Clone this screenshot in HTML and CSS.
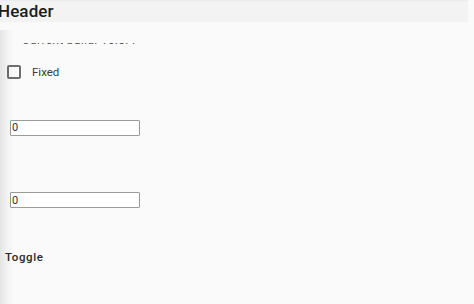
FILE: index.html
```html
<!DOCTYPE html>
<html>
<head>
<meta charset="utf-8">
<link rel="stylesheet" href="styles.css">
</head>
<body>
<div class="app">
  <header class="toolbar"><span class="title">Header</span></header>
  <main class="content">
    <div class="build-clip"><div class="build">Current build: 16.0.4</div></div>
    <label class="check"><span class="box"></span><span class="check-label">Fixed</span></label>
    <div class="field"><input class="num" type="text" value="0"></div>
    <div class="field second"><input class="num" type="text" value="0"></div>
    <div class="toggle">Toggle</div>
  </main>
  <div class="edge-shadow"></div>
</div>
</body>
</html>
```
FILE: styles.css
```css
html, body { margin: 0; padding: 0; }
body {
  background: #fafafa;
  font-family: Roboto, "Noto Sans", sans-serif;
  color: #212121;
  width: 474px;
  height: 304px;
  overflow: hidden;
}
.app {
  position: relative;
  width: 474px;
  height: 304px;
  display: flex;
  flex-direction: column;
}
.toolbar {
  height: 22px;
  width: 468px;
  background: #f3f3f3;
  box-shadow: inset 0 2px 2px -1px rgba(0,0,0,0.04);
  display: flex;
  align-items: center;
}
.title {
  margin-left: -2px;
  font-size: 17px;
  font-weight: 500;
  color: #1c1c1c;
  letter-spacing: 0.1px;
}
.content {
  display: flex;
  flex-direction: column;
  align-items: flex-start;
}
.build-clip {
  margin-top: 21px;
  height: 2px;
  overflow: hidden;
  padding-left: 22px;
}
.build {
  margin-top: -9px;
  font-size: 12px;
  line-height: 13px;
  color: #555;
  letter-spacing: 0.3px;
}
.check {
  margin-top: 20px;
  display: flex;
  align-items: center;
  margin-left: 7px;
}
.box {
  width: 10px;
  height: 10px;
  border: 2px solid #6e6e6e;
  border-radius: 2px;
  box-sizing: content-box;
}
.check-label {
  margin-left: 11px;
  font-size: 11.5px;
  color: #3a3a3a;
}
.field { margin-top: 37px; margin-left: 10px; }
.field.second { margin-top: 53px; }
.num {
  box-sizing: border-box;
  width: 130px;
  height: 16px;
  padding: 0 1px;
  border: 1px solid #9a9a9a;
  border-radius: 1px;
  background: #fff;
  font-family: Roboto, sans-serif;
  font-size: 11px;
  color: #333;
  outline: none;
}
.toggle {
  margin-top: 42px;
  margin-left: 5px;
  font-size: 11.5px;
  font-weight: 500;
  letter-spacing: 0.6px;
  color: #2a2a2a;
}
.edge-shadow {
  position: absolute;
  left: 0;
  top: 30px;
  width: 14px;
  bottom: 0;
  background: linear-gradient(to right, rgba(0,0,0,0.09), rgba(0,0,0,0.03) 50%, rgba(0,0,0,0));
  pointer-events: none;
}
```
